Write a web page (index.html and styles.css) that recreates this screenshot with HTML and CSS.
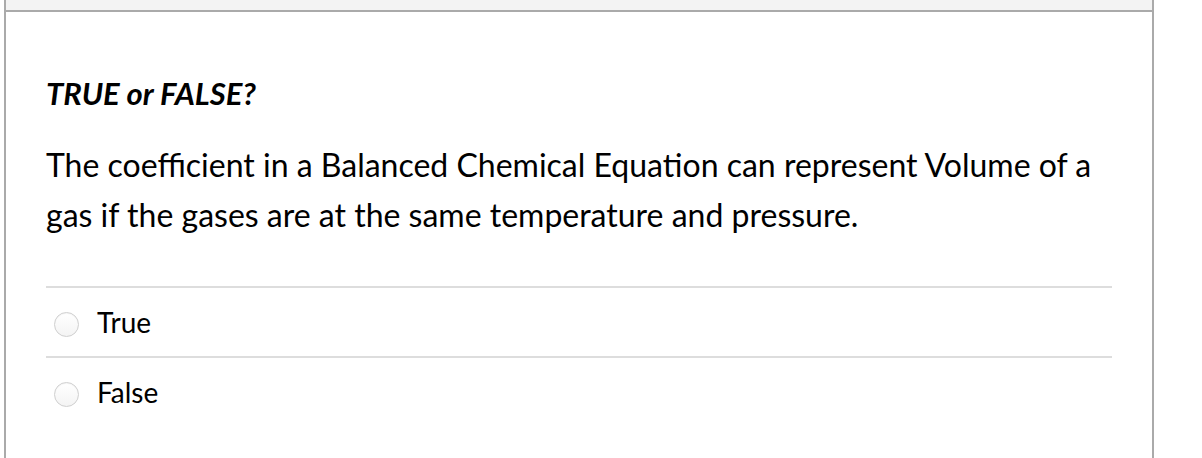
FILE: index.html
```html
<!DOCTYPE html>
<html>
<head>
<meta charset="utf-8">
<link rel="stylesheet" href="styles.css">
</head>
<body>
<div class="question">
  <div class="header"></div>
  <div class="content">
    <p class="title"><strong><em>TRUE or FALSE?</em></strong></p>
    <p class="text">The coefficient in a Balanced Chemical Equation can represent Volume of a gas if the gases are at the same temperature and pressure.</p>
    <div class="answers">
      <label class="answer"><span class="radio"></span><span class="label">True</span></label>
      <label class="answer"><span class="radio"></span><span class="label">False</span></label>
    </div>
  </div>
</div>
</body>
</html>
```
FILE: styles.css
```css
html, body {
  margin: 0;
  padding: 0;
  background: #fff;
}
body {
  font-family: Lato, "Open Sans", sans-serif;
  color: #000;
}
.question {
  margin-left: 4px;
  width: 1146px;
  height: 458px;
  border-left: 2px solid #aaaaaa;
  border-right: 2px solid #aaaaaa;
  overflow: hidden;
}
.header {
  height: 10px;
  background: #f3f3f3;
  border-bottom: 2px solid #aaaaaa;
}
.content {
  padding: 0 40px;
}
.title {
  margin: 61px 0 0;
  font-size: 31px;
  line-height: 40px;
}
.text {
  margin: 27px 0 0;
  font-size: 32px;
  line-height: 50px;
}
.answers {
  margin-top: 46px;
  border-top: 2px solid #dddddd;
}
.answer {
  display: flex;
  align-items: center;
  height: 68px;
  border-bottom: 2px solid #dddddd;
}
.answer:last-child {
  border-bottom: none;
}
.radio {
  width: 25px;
  height: 25px;
  margin-left: 8px;
  margin-top: 5px;
  border-radius: 50%;
  border: 1px solid #cfcfcf;
  background: linear-gradient(#ffffff, #f4f4f4);
  box-shadow: inset 0 1px 1px rgba(0,0,0,0.04);
  box-sizing: border-box;
  flex: none;
}
.label {
  margin-left: 18px;
  font-size: 28px;
}
```
